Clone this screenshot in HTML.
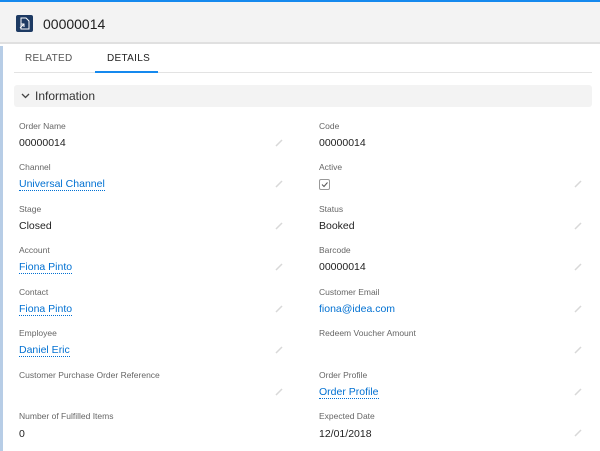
<!DOCTYPE html>
<html><head><style>
*{margin:0;padding:0;box-sizing:border-box}
body{width:600px;height:451px;overflow:hidden;background:#fff;font-family:"Liberation Sans",sans-serif;position:relative;color:#16325c}
.top{position:absolute;left:0;top:0;width:600px;height:2px;background:#1589ee}
.hdr{position:absolute;left:0;top:2px;width:600px;height:42px;background:#f3f3f3;border-bottom:2px solid #e0e0e0}
.icon{position:absolute;left:16px;top:13px;width:17px;height:17px;background:#1d3a63;border-radius:2px}
.title{position:absolute;left:43px;top:14px;font-size:14px;color:#222}
.strip{position:absolute;left:0;top:46px;width:3px;height:405px;background:#b7cde6}
.tab{position:absolute;top:53px;font-size:10px;letter-spacing:.3px;color:#555}
.tabline{position:absolute;left:14px;top:72px;width:578px;height:1px;background:#e3e3e3}
.act{position:absolute;left:95px;top:71px;width:63px;height:2px;background:#1589ee}
.sec{position:absolute;left:14px;top:85px;width:578px;height:22px;background:#f3f3f3;border-radius:3px}
.sec span{position:absolute;left:21px;top:4px;font-size:12px;color:#333}
.sec svg{position:absolute;left:7px;top:8px}
.l{position:absolute;font-size:8.5px;color:#666}
.v{position:absolute;font-size:10.5px;color:#222}
.a{color:#0070d2;border-bottom:1px dotted #0070d2}
</style></head><body>
<div class="top"></div>
<div class="hdr"><div class="icon"><svg width="17" height="17" viewBox="0 0 17 17"><path d="M5 3h5l3 3v8H5z" fill="none" stroke="#fff" stroke-width="1"/><path d="M4 13l4-4M5 9h3v3" fill="none" stroke="#fff" stroke-width="1"/></svg></div><div class="title">00000014</div></div>
<div class="strip"></div>
<div class="tab" style="left:25px">RELATED</div>
<div class="tab" style="left:107px;color:#222">DETAILS</div>
<div class="tabline"></div><div class="act"></div>
<div class="sec"><svg width="9" height="6" viewBox="0 0 9 6"><path d="M1 1l3.5 3.5L8 1" fill="none" stroke="#444" stroke-width="1.3"/></svg><span>Information</span></div>
<div class="l" style="left:19px;top:121px">Order Name</div><div class="v" style="left:19px;top:137px">00000014</div>
<div class="l" style="left:319px;top:121px">Code</div><div class="v" style="left:319px;top:137px">00000014</div>
<div class="l" style="left:19px;top:162px">Channel</div><div class="v" style="left:19px;top:178px"><span class="a">Universal Channel</span></div>
<div class="l" style="left:319px;top:162px">Active</div><div class="v" style="left:319px;top:179px;width:11px;height:11px;border:1px solid #999;border-radius:2px"><svg width="9" height="9" viewBox="0 0 9 9" style="position:absolute;left:0;top:0"><path d="M2 4.5l2 2 3.5-4" fill="none" stroke="#555" stroke-width="1"/></svg></div>
<div class="l" style="left:19px;top:204px">Stage</div><div class="v" style="left:19px;top:220px">Closed</div>
<div class="l" style="left:319px;top:204px">Status</div><div class="v" style="left:319px;top:220px">Booked</div>
<div class="l" style="left:19px;top:245px">Account</div><div class="v" style="left:19px;top:261px"><span class="a">Fiona Pinto</span></div>
<div class="l" style="left:319px;top:245px">Barcode</div><div class="v" style="left:319px;top:261px">00000014</div>
<div class="l" style="left:19px;top:287px">Contact</div><div class="v" style="left:19px;top:303px"><span class="a">Fiona Pinto</span></div>
<div class="l" style="left:319px;top:287px">Customer Email</div><div class="v" style="left:319px;top:303px"><span class="a" style="border:0">fiona@idea.com</span></div>
<div class="l" style="left:19px;top:328px">Employee</div><div class="v" style="left:19px;top:344px"><span class="a">Daniel Eric</span></div>
<div class="l" style="left:319px;top:328px">Redeem Voucher Amount</div>
<div class="l" style="left:19px;top:370px">Customer Purchase Order Reference</div>
<div class="l" style="left:319px;top:370px">Order Profile</div><div class="v" style="left:319px;top:386px"><span class="a">Order Profile</span></div>
<div class="l" style="left:19px;top:411px">Number of Fulfilled Items</div><div class="v" style="left:19px;top:428px">0</div>
<div class="l" style="left:319px;top:411px">Expected Date</div><div class="v" style="left:319px;top:428px">12/01/2018</div>
<svg width="600" height="451" style="position:absolute;left:0;top:0" fill="none" stroke="#d8d8d8" stroke-width="1.5">
<path d="M276 146l6-6M276 187l6-6M276 229l6-6M276 270l6-6M276 312l6-6M276 353l6-6M276 395l6-6M575 187l6-6M575 229l6-6M575 270l6-6M575 312l6-6M575 353l6-6M575 395l6-6M575 436l6-6"/>
</svg>
</body></html>
